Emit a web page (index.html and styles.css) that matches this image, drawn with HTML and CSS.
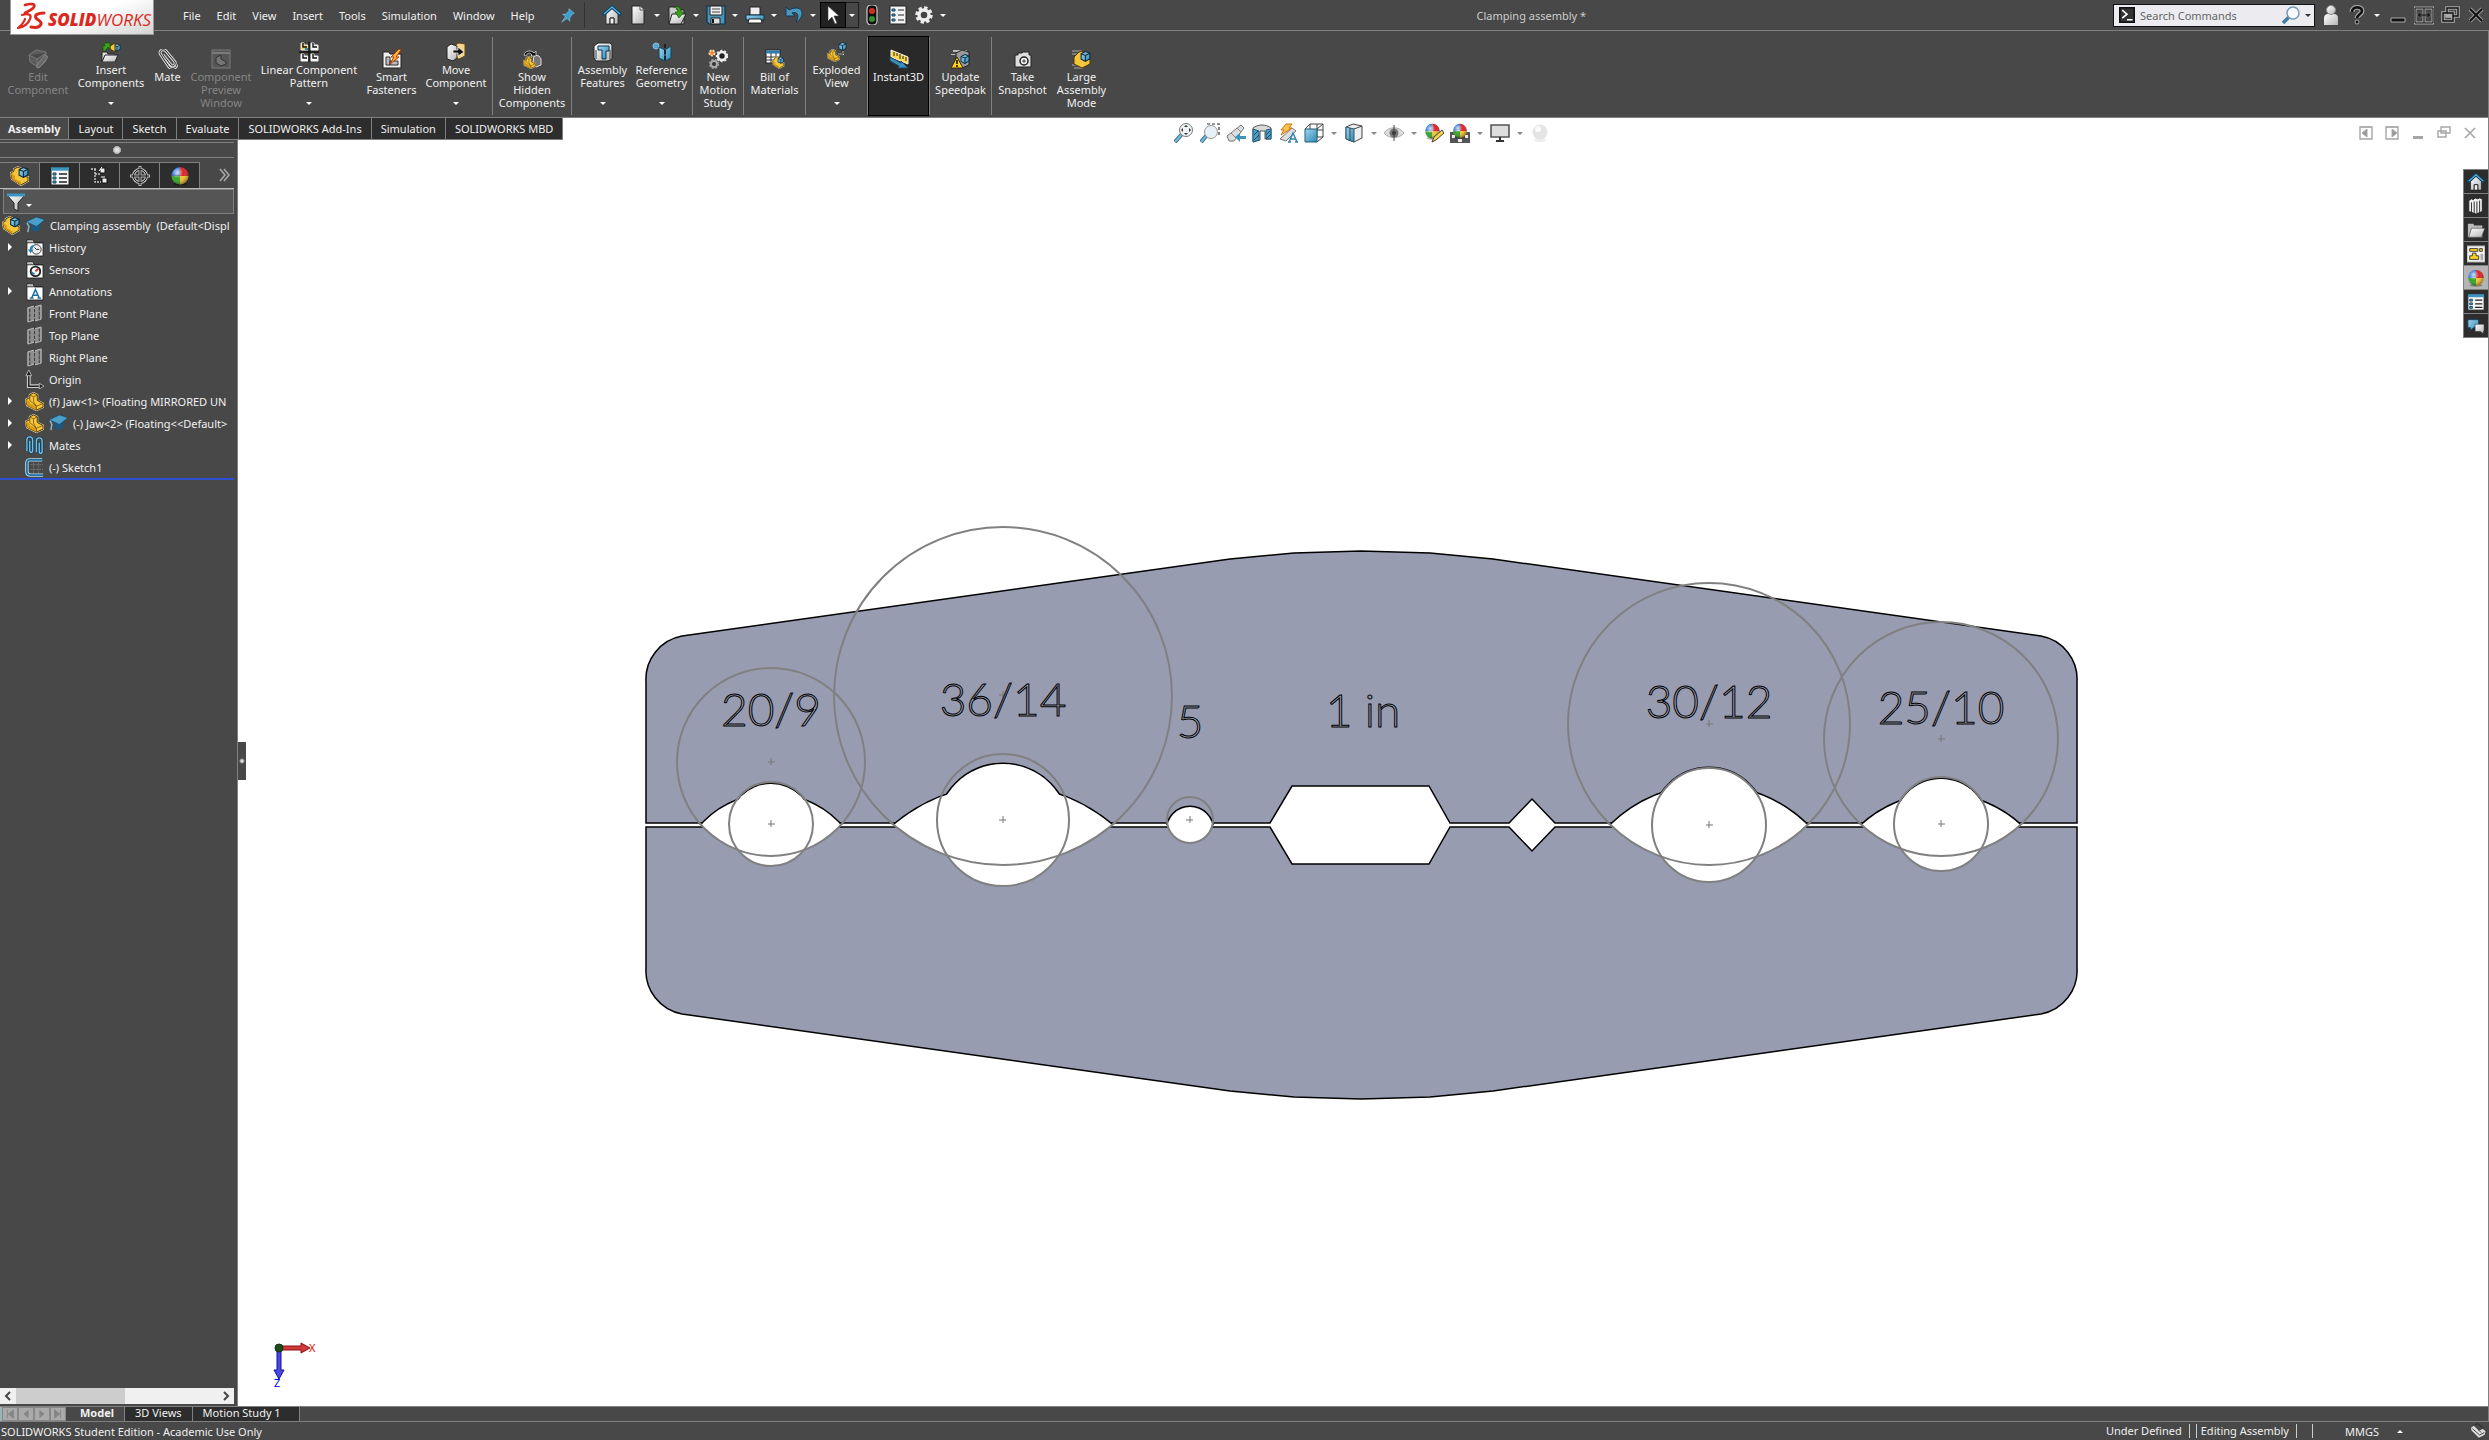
FILE: index.html
```html
<!DOCTYPE html>
<html lang="en">
<head>
    <meta charset="UTF-8">
    <meta name="viewport" content="width=device-width, initial-scale=1.0">
    <title>Clamping assembly - SOLIDWORKS</title>
    <link rel="stylesheet" href="styles.css">
</head>
<body>
    <!-- Icon set -->
    <svg class="sprite" aria-hidden="true">
        <defs>
            <linearGradient id="blue" x1="0" y1="0" x2="1" y2="1"><stop offset="0" stop-color="#9fd8f0"/><stop offset="1" stop-color="#2d86b4"/></linearGradient>
            <linearGradient id="silver" x1="0" y1="0" x2="1" y2="1"><stop offset="0" stop-color="#fff"/><stop offset="1" stop-color="#b4b4b4"/></linearGradient>
            <radialGradient id="shine" cx=".35" cy=".3" r=".7"><stop offset="0" stop-color="#fff" stop-opacity=".8"/><stop offset=".5" stop-color="#fff" stop-opacity="0"/><stop offset="1" stop-opacity=".35"/></radialGradient>
        </defs>
        <symbol id="i-part" viewBox="0 0 20 20">
            <path d="M1 8l4-2V3l4-2 4 2v6l6 3v4l-7 3L2 14z" fill="#f6c63a" stroke="#e8dcae" stroke-width="2" stroke-linejoin="round"/>
            <path d="M1 8l4-2V3l4-2 4 2v6l6 3v4l-7 3L2 14z" fill="#f6c63a" stroke="#4b3505" stroke-linejoin="round"/>
            <path d="M1 8l4 2v2l7 3v4L2 14z" fill="#d99a14"/>
            <path d="M5 3l4 2 4-2M9 5v5l3 5 7-3M5 6v3l7 6v4" fill="none" stroke="#6b4c08" stroke-width=".8"/>
        </symbol>
        <symbol id="i-cube" viewBox="0 0 20 20">
            <path d="M2 5l8-4 8 3v10l-8 5-8-4z" fill="url(#blue)" stroke="#0d2a3c" stroke-width="2"/>
            <path d="M2 5l8 3 8-4M10 8v11" fill="none" stroke="#0d2a3c" stroke-width="2"/>
        </symbol>
        <symbol id="i-assembly" viewBox="0 0 20 20">
            <path d="M1 7l3-2V3l4-2 4 2v7l6 1v4l-7 4-9-6z" fill="#f6c63a" stroke="#e8dcae" stroke-width="2"/>
            <path d="M1 7l3-2V3l4-2 4 2v7l6 1v4l-7 4-9-6z" fill="#f6c63a" stroke="#4b3505"/>
            <path d="M1 7l4 3v3l6 3v3l-9-6z" fill="#d99a14"/>
            <use href="#i-cube" x="8" y="1" width="11" height="11"/>
        </symbol>
        <symbol id="i-assembly-off" viewBox="0 0 20 20">
            <path d="M1 6l4-3 4-2 9 2v9l-7 7-9-6zM1 6l8 4 9-6M9 10v8" fill="#5c5c5c" stroke="#777"/>
            <path d="M9 16l8-10 3 2-8 10-3 1z" fill="#686868" stroke="#868686"/>
        </symbol>
        <symbol id="i-insert" viewBox="0 0 20 20">
            <use href="#i-cube" x="12" y="1" width="8" height="9"/>
            <path d="M9 4l5-3v9l-5-3z" fill="#f6c63a" stroke="#4b3505"/>
            <path d="M1 10h5l1 2h7v8H1z" fill="#ddd" stroke="#222"/>
            <path d="M4 13h13l-3 7H1z" fill="url(#silver)" stroke="#222"/>
            <path d="M2 9V4h2l-1-3h6v6L7 5 4 9z" fill="#3aa21b" stroke="#114d05" stroke-width=".6"/>
        </symbol>
        <symbol id="i-mate" viewBox="0 0 20 20">
            <path d="M5 6l8 10c2 2 5 0 4-3L8 2C5-1 0 2 3 6l8 12c3 3 8 1 8-3" fill="none" stroke="#d8d8d8" stroke-width="3"/>
            <path d="M5 6l8 10c2 2 5 0 4-3L8 2C5-1 0 2 3 6l8 12c3 3 8 1 8-3" fill="none" stroke="#222"/>
        </symbol>
        <symbol id="i-preview" viewBox="0 0 20 20">
            <rect x="1" y="1" width="18" height="18" fill="#565656" stroke="#7a7a7a"/>
            <path d="M1 4h18" stroke="#7a7a7a" stroke-width="2"/>
            <path d="M6 8l4-2v4l5 3v2l-5 2-5-3V9z" fill="#747474" stroke="#333"/>
        </symbol>
        <symbol id="i-pattern" viewBox="0 0 20 20">
            <g stroke="#e8e8e8" stroke-width="1"><path d="M2 1h3v2h4v5H2z" fill="#f6d24a"/><path d="M12 1h3v2h4v5h-7zM2 12h3v2h4v5H2zM12 12h3v2h4v5h-7z" fill="#fff"/></g>
            <path d="M4 1v4h4M14 1v4h4M4 12v4h4M14 12v4h4M10 0v20M0 10h20" stroke="#111" stroke-width="1.4" fill="none"/>
            <path d="M6 6h3v2H6z" fill="#2b8fc4"/>
        </symbol>
        <symbol id="i-smart" viewBox="0 0 20 20">
            <path d="M1 3h6l1 2h11v14H1z" fill="#eee" stroke="#222"/>
            <path d="M4 8v8h4V8zM8 12h8v4H8z" fill="#bbb" stroke="#333"/>
            <path d="M17 0L9 8h3l-4 7 9-7h-3l5-7z" fill="#ffb52e" stroke="#b3390a"/>
        </symbol>
        <symbol id="i-move" viewBox="0 0 20 20">
            <path d="M9 3l4-2 6 1v12l-6 3-4-2z" fill="#f4d491" stroke="#6a4b10"/>
            <path d="M1 5l4-3 6 2v12l-4 3-6-2z" fill="url(#silver)" stroke="#222"/>
            <path d="M7 8h5V5l6 5-6 4v-3H7z" fill="#111" stroke="#fff" stroke-width=".7"/>
        </symbol>
        <symbol id="i-showhide" viewBox="0 0 20 20">
            <path d="M12 6l5 1 2 3v6l-5 2-3-3z" fill="#777" stroke="#ddd"/>
            <use href="#i-part" x="1" y="7" width="13" height="13"/>
            <path d="M2 6c1-5 8-5 10-2l2-2v5H9l1-1C8 3 5 4 4 7z" fill="#111" stroke="#ddd" stroke-width=".8"/>
        </symbol>
        <symbol id="i-features" viewBox="0 0 20 20">
            <path d="M1 4l4-3h12l2 2v14l-4 2H3l-2-3z" fill="url(#silver)" stroke="#222"/>
            <path d="M5 4h11v5h-3v8H9V8H5z" fill="url(#blue)" stroke="#0d3550"/>
            <path d="M3 8v9M17 8v9" stroke="#444"/>
        </symbol>
        <symbol id="i-refgeo" viewBox="0 0 20 20">
            <circle cx="4" cy="4" r="3" fill="#4fa6d4" stroke="#9bd"/>
            <path d="M7 5l6 3v11l-6-3zM13 8l6-4v12l-6 3z" fill="url(#blue)" stroke="#17425c"/>
            <path d="M13 2v18" stroke="#111" stroke-width="1.4" stroke-dasharray="4 2"/>
        </symbol>
        <symbol id="i-motion" viewBox="0 0 20 20">
            <circle cx="4" cy="4" r="2.5" fill="#f37a20" stroke="#ffd9a8" stroke-width="2" stroke-dasharray="2 1"/>
            <circle cx="14" cy="7" r="4" fill="#222" stroke="#eee" stroke-width="2.6"/>
            <circle cx="14" cy="7" r="5.6" fill="none" stroke="#eee" stroke-width="1.4" stroke-dasharray="2 2"/>
            <circle cx="6" cy="15" r="3" fill="#333" stroke="#aaa" stroke-width="2"/>
            <circle cx="6" cy="15" r="4.4" fill="none" stroke="#aaa" stroke-width="1.2" stroke-dasharray="2 1.5"/>
        </symbol>
        <symbol id="i-bom" viewBox="0 0 20 20">
            <rect x="1" y="1" width="14" height="13" fill="#fff" stroke="#222"/>
            <path d="M1 3h14" stroke="#2b7fae" stroke-width="3"/>
            <path d="M1 8h14M1 11h14M6 4v10M11 4v10" stroke="#333"/>
            <use href="#i-assembly" x="7" y="7" width="13" height="13"/>
        </symbol>
        <symbol id="i-exploded" viewBox="0 0 20 20">
            <use href="#i-part" x="0" y="7" width="13" height="13"/>
            <use href="#i-cube" x="11" y="0" width="9" height="9"/>
            <path d="M11 12h5V9" fill="none" stroke="#ddd" stroke-width="2"/><path d="M11 12h5V9" fill="none" stroke="#111"/>
        </symbol>
        <symbol id="i-instant" viewBox="0 0 20 20">
            <path d="M2 1l17 7v7L2 8z" fill="#ffd84a" stroke="#eee"/>
            <path d="M5 3v4M8 4v3M11 5v5M14 7v3M17 8v4" stroke="#222"/>
            <path d="M1 8l11 6v-2l7 7-10 0 1-2L1 12z" fill="#3f8fbb" stroke="#1c4760"/>
        </symbol>
        <symbol id="i-speedpak" viewBox="0 0 20 20">
            <path d="M2 1h14v2H2zM0 5h8v1H0z" fill="#bbb"/>
            <path d="M5 4l6-3 7 2v13l-7 3-6-2z" fill="#999" stroke="#222"/>
            <use href="#i-cube" x="9" y="2" width="10" height="16"/>
            <path d="M6 8l6 11H0z" fill="#ffd21f" stroke="#3a2c00"/>
            <path d="M6 11v4M6 16v2" stroke="#111" stroke-width="1.6"/>
        </symbol>
        <symbol id="i-camera" viewBox="0 0 20 20">
            <path d="M2 6h3V4h4l1-1h6v3h2v12H2z" fill="#ddd" stroke="#222"/>
            <circle cx="11" cy="12" r="4" fill="#eee" stroke="#222" stroke-width="1.5"/><circle cx="11" cy="12" r="1.6" fill="#555"/>
        </symbol>
        <symbol id="i-large" viewBox="0 0 20 20">
            <path d="M0 2h10M0 5h8M0 16h6M2 19h9" stroke="#aaa"/>
            <path d="M2 8l5-5 4-1v9l7-1v5l-8 4-8-4z" fill="#f6c63a" stroke="#4b3505"/>
            <use href="#i-cube" x="8" y="1" width="11" height="13"/>
        </symbol>
        <symbol id="i-pin" viewBox="0 0 20 20">
            <path d="M11 3l6 5-2 1-3 4 0 4-3-3-6 4 4-6-3-3 4 0 3-4z" fill="#3d9fd0" stroke="#8cc6e2" stroke-width=".6"/>
        </symbol>
        <symbol id="i-home" viewBox="0 0 20 20">
            <path d="M4 9l6-6 6 6v10h-4v-6H8v6H4z" fill="url(#silver)" stroke="#222" stroke-width=".8"/>
            <path d="M8 13h4v6H8z" fill="#eee" stroke="#222"/>
            <path d="M1 10l9-8 9 8" fill="none" stroke="#0f4666" stroke-width="3.4"/><path d="M2 9l8-7 8 7" fill="none" stroke="#5fb5dc" stroke-width="1.2"/>
        </symbol>
        <symbol id="i-new" viewBox="0 0 20 20">
            <path d="M4 1h8l4 4v14H4z" fill="url(#silver)" stroke="#222"/><path d="M12 1v4h4" fill="#eee" stroke="#555"/>
        </symbol>
        <symbol id="i-open" viewBox="0 0 20 20">
            <path d="M2 2h8v3h7v14H2z" fill="#ccc" stroke="#222"/>
            <path d="M5 9h14l-5 10H2z" fill="url(#silver)" stroke="#222"/>
            <path d="M7 2c5-2 7 2 7 5h3l-5 6-4-6h3c0-3-2-4-4-5z" fill="#3aa21b" stroke="#114d05" stroke-width=".6"/>
        </symbol>
        <symbol id="i-save" viewBox="0 0 20 20">
            <path d="M1 1h18v18H3l-2-2z" fill="#4a93b9" stroke="#0f3247" stroke-width="1.2"/>
            <path d="M4 1h12v9H4z" fill="#eee" stroke="#222"/><path d="M6 4h8M6 7h8" stroke="#444"/>
            <path d="M5 13h9v6H5z" fill="#ddd" stroke="#222"/><path d="M7 14v4" stroke="#111" stroke-width="2"/>
        </symbol>
        <symbol id="i-print" viewBox="0 0 20 20">
            <path d="M5 2h10v8H5z" fill="#eee" stroke="#222"/>
            <path d="M1 10h18v5H1z" fill="url(#blue)" stroke="#0f3247"/>
            <path d="M4 14h12l1 4H3z" fill="#fff" stroke="#222"/>
        </symbol>
        <symbol id="i-undo" viewBox="0 0 20 20">
            <path d="M2 2v9h9L8 8c5-2 8 2 4 9 8-4 8-14 0-14-3 0-5 1-7 2z" fill="#4a97bf" stroke="#123c55"/>
        </symbol>
        <symbol id="i-cursor" viewBox="0 0 20 20">
            <path d="M5 1v15l4-4 3 7 2-1-3-7h5z" fill="#fff" stroke="#444" stroke-width=".6"/>
        </symbol>
        <symbol id="i-traffic" viewBox="0 0 20 20">
            <rect x="5" y="0" width="10" height="20" rx="4" fill="#111" stroke="#ccc" stroke-width="1.2"/>
            <circle cx="10" cy="6" r="3" fill="#d62e1e"/><circle cx="10" cy="14" r="3" fill="#319132"/>
        </symbol>
        <symbol id="i-list" viewBox="0 0 20 20">
            <path d="M2 1h16v18H2z" fill="#f3f3f3" stroke="#222"/>
            <path d="M4 4h3v2H4zM4 9h3v2H4zM4 14h3v2H4z" fill="#4fb0de" stroke="#14415c"/>
            <path d="M10 5h6M10 10h6M10 15h6" stroke="#222" stroke-width="1.2"/>
        </symbol>
        <symbol id="i-gear" viewBox="0 0 20 20">
            <circle cx="10" cy="10" r="7.4" fill="none" stroke="#eee" stroke-width="2.6" stroke-dasharray="3.4 2.4"/>
            <circle cx="10" cy="10" r="5" fill="#444" stroke="#eee" stroke-width="3.4"/>
        </symbol>
        <symbol id="i-props" viewBox="0 0 20 20">
            <path d="M1 2h18v17H1z" fill="#f6f6f6" stroke="#222"/><path d="M1 3h18" stroke="#3d95c2" stroke-width="3.4"/>
            <path d="M3 7h3v2H3zM3 11h3v2H3zM3 15h3v2H3z" fill="#4fb0de" stroke="#14415c"/>
            <path d="M9 8h8M9 12h8M9 16h8" stroke="#222" stroke-width="1.3"/>
        </symbol>
        <symbol id="i-config" viewBox="0 0 20 20">
            <path d="M1 3h6M5 3v13h6M5 8h6" fill="none" stroke="#ccc" stroke-width="1.4" stroke-dasharray="2 1"/>
            <path d="M10 2h5v5h-5z" fill="#eee" stroke="#111"/><path d="M12 12h5v5h-5z" fill="#eee" stroke="#111"/><path d="M9 5l3-4M11 11h4" stroke="#fff"/>
        </symbol>
        <symbol id="i-target" viewBox="0 0 20 20">
            <g fill="none" stroke="#bbb" stroke-width="3"><circle cx="10" cy="10" r="6.5"/><path d="M10 0v20M0 10h20"/></g>
            <g fill="none" stroke="#111"><circle cx="10" cy="10" r="6.5"/><path d="M10 1v18M1 10h18"/></g>
        </symbol>
        <symbol id="i-ball" viewBox="0 0 20 20">
            <ellipse cx="10" cy="18" rx="7" ry="1.6" fill="#000" opacity=".3"/>
            <path d="M10 9V1a8.500 8.500 0 0 0-8.500 9z" fill="#2b6fd4"/><path d="M10 10V1a8.500 8.500 0 0 1 8.500 9z" fill="#d92525"/>
            <path d="M1.500 10H10v8.500A8.500 8.500 0 0 1 1.500 10z" fill="#37a32a"/><path d="M18.500 10H10v8.500a8.500 8.500 0 0 0 8.500-8.500z" fill="#f5c431"/>
            <circle cx="10" cy="10" r="8.500" fill="url(#shine)"/>
        </symbol>
        <symbol id="i-funnel" viewBox="0 0 20 20">
            <path d="M1 3h18l-7 8v8l-4-2v-6z" fill="url(#silver)" stroke="#222"/><path d="M1 3h18" stroke="#3d95c2" stroke-width="3"/>
        </symbol>
        <symbol id="i-cap" viewBox="0 0 20 20">
            <path d="M6 9v5c2 4 7 3 9-1V8z" fill="#1a5a80"/>
            <path d="M0 6l11-5 9 3-9 7z" fill="#4aa0cb" stroke="#0f3a54" stroke-width=".6"/>
            <path d="M1 7l2 4-1 6" fill="none" stroke="#7fb6d2" stroke-width="1.6"/>
        </symbol>
        <symbol id="i-folder" viewBox="0 0 20 20">
            <path d="M2 2h6l2 3h9v14H2z" fill="#fff" stroke="#222"/><path d="M2 5h17" stroke="#222"/><path d="M3 3h5" stroke="#aaa" stroke-width="2"/>
        </symbol>
        <symbol id="i-history" viewBox="0 0 20 20">
            <use href="#i-folder"/><circle cx="12" cy="12" r="5" fill="#eee" stroke="#333"/><path d="M10 10l2 2h3" stroke="#222" fill="none"/><path d="M10 7c-4 0-5 3-5 5H3l3 4 3-4H7" fill="#2b86b8"/>
        </symbol>
        <symbol id="i-sensor" viewBox="0 0 20 20">
            <use href="#i-folder"/><circle cx="11" cy="12" r="5" fill="#fff" stroke="#222" stroke-width="2"/><path d="M11 12l3-3" stroke="#d22" stroke-width="2"/><path d="M7 13l3 2" stroke="#2b86b8" stroke-width="2"/>
        </symbol>
        <symbol id="i-note" viewBox="0 0 20 20">
            <use href="#i-folder"/><path d="M7 17l4-9 4 9M8 14h6M5 17h4M13 17h4" fill="none" stroke="#1c6f9f" stroke-width="1.5"/>
        </symbol>
        <symbol id="i-plane" viewBox="0 0 20 20">
            <path d="M3 4l7-2v15l-7 2zM10 3l7-2v15l-7 2z" fill="#8e8e8e" stroke="#bdbdbd"/>
            <path d="M10 0v20M5 5v13M15 3v13" stroke="#333" stroke-dasharray="4 1"/>
        </symbol>
        <symbol id="i-origin" viewBox="0 0 20 20">
            <path d="M4 3v14h13" fill="none" stroke="#ccc" stroke-width="4"/><path d="M4 3v14h13" fill="none" stroke="#222" stroke-width="1.600"/>
            <path d="M4 0L1 6h6zM20 17l-5-3v6z" fill="#222" stroke="#ccc" stroke-width=".8"/>
        </symbol>
        <symbol id="i-mates" viewBox="0 0 20 20">
            <g fill="none" stroke="#15435e" stroke-width="3"><path d="M2 16V4c0-4 6-4 6 0v11c0 3-3 3-3 0V5M12 17V5c0-4 6-4 6 0v11c0 3-3 3-3 0V7"/></g>
            <g fill="none" stroke="#79bfe0" stroke-width="1.4"><path d="M2 16V4c0-4 6-4 6 0v11c0 3-3 3-3 0V5M12 17V5c0-4 6-4 6 0v11c0 3-3 3-3 0V7"/></g>
        </symbol>
        <symbol id="i-sketch" viewBox="0 0 20 20">
            <path d="M6 7h13M6 12h13M9 5v12M14 5v12" stroke="#777" stroke-dasharray="2 1"/>
            <path d="M18 2H5C3 2 2 3 2 5v9c0 2 1 4 4 4h13" fill="none" stroke="#b9dcec" stroke-width="3.6"/>
            <path d="M18 2H5C3 2 2 3 2 5v9c0 2 1 4 4 4h13" fill="none" stroke="#1c6f9f" stroke-width="1.8"/>
        </symbol>
        <symbol id="i-zoomfit" viewBox="0 0 20 20">
            <path d="M1 19l7-8" stroke="#2f6f90" stroke-width="4"/><path d="M1 19l7-8" stroke="#7db7d3" stroke-width="2"/>
            <circle cx="12" cy="7" r="6.500" fill="#eef3f5" stroke="#777"/><path d="M12 2l2 2h-4zM12 12l2-2h-4zM7 7l2-2v4zM17 7l-2-2v4z" fill="#333"/>
        </symbol>
        <symbol id="i-zoomarea" viewBox="0 0 20 20">
            <path d="M7 1h12v12" fill="none" stroke="#333" stroke-width="1.2" stroke-dasharray="3 2"/>
            <path d="M1 19l6-7" stroke="#2f6f90" stroke-width="4"/><path d="M1 19l6-7" stroke="#7db7d3" stroke-width="2"/><circle cx="11" cy="9" r="6.500" fill="#e6f0f6" stroke="#999"/>
        </symbol>
        <symbol id="i-prev" viewBox="0 0 20 20">
            <path d="M1 13L15 2l3 3L8 18H3z" fill="#ddd" stroke="#777"/><path d="M5 10l5 5M11 5l4 4" stroke="#888"/>
            <path d="M9 14l5-4v3h6v3h-6v3z" fill="#3f94bf"/>
        </symbol>
        <symbol id="i-section" viewBox="0 0 20 20">
            <path d="M1 5c5-4 13-4 18 0v11h-6V8H8v9l-7 2z" fill="#d8d8d8" stroke="#555"/>
            <path d="M1 6l6 2v9l-6 2zM14 7l5-1v10h-5z" fill="#4aa0cb" stroke="#245a78"/><path d="M2 12l4-4M2 17l5-5M14 12l4-4M14 16l5-5" stroke="#1b4a66"/>
        </symbol>
        <symbol id="i-annview" viewBox="0 0 20 20">
            <path d="M2 16L14 5l4 3L8 18z" fill="#ddd" stroke="#777"/><path d="M8 1h6l-3 4h3L3 12l3-5H3z" fill="#ffc04a" stroke="#c77a16"/>
            <path d="M11 19l4-9 4 9M12 16h6M10 19h3M17 19h3" fill="none" stroke="#2f86b2" stroke-width="1.500"/>
        </symbol>
        <symbol id="i-orient" viewBox="0 0 20 20">
            <path d="M6 1h13v13H6zM1 6l5-5M13 6l6-5M13 19l6-5M13 1v13M6 7h13" fill="none" stroke="#444"/><path d="M1 6h12v13H1z" fill="url(#blue)" stroke="#245a78"/>
        </symbol>
        <symbol id="i-display" viewBox="0 0 20 20">
            <path d="M2 4l7-3 9 2v12l-8 4-8-3z" fill="#eee" stroke="#444"/><path d="M2 4l8 2v13l-8-3z" fill="url(#blue)" stroke="#245a78"/><path d="M10 6l8-3M6 5v13" stroke="#444"/>
        </symbol>
        <symbol id="i-eye" viewBox="0 0 20 20">
            <path d="M0 10c5-7 15-7 20 0-5 6-15 6-20 0z" fill="#ddd" stroke="#aaa"/><circle cx="10" cy="10" r="4.500" fill="#777"/><circle cx="10" cy="10" r="2" fill="#333"/><path d="M10 2v16" stroke="#444"/>
        </symbol>
        <symbol id="i-appear" viewBox="0 0 20 20">
            <use href="#i-ball" x="0" y="0" width="17" height="17"/><path d="M8 19l2-5 8-7 2 3-8 7z" fill="#f6d24a" stroke="#444"/>
        </symbol>
        <symbol id="i-scene" viewBox="0 0 20 20">
            <path d="M0 9h20v11H0z" fill="#555"/><path d="M2 12h3v3H2zM8 16h4v3H8zM15 12h3v3h-3z" fill="#eee"/><use href="#i-ball" x="2" y="0" width="16" height="16"/>
        </symbol>
        <symbol id="i-monitor" viewBox="0 0 20 20">
            <path d="M1 2h18v12H1z" fill="#ddd" stroke="#555" stroke-width="1.600"/><path d="M10 14v4M6 18h8" stroke="#333" stroke-width="2"/>
        </symbol>
        <symbol id="i-ghost" viewBox="0 0 20 20">
            <ellipse cx="10" cy="17" rx="6" ry="2" fill="#eee"/><circle cx="10" cy="9" r="7.500" fill="#e4e4e4"/><circle cx="8" cy="6" r="3" fill="#fafafa"/>
        </symbol>
        <symbol id="i-search" viewBox="0 0 20 20">
            <path d="M2 18l6-6" stroke="#3d7fa3" stroke-width="3.500"/><circle cx="12" cy="8" r="6" fill="#f6fafd" stroke="#7c9ab0" stroke-width="1.500"/>
        </symbol>
        <symbol id="i-prompt" viewBox="0 0 20 20">
            <path d="M1 1h18v18H1z" fill="#333" stroke="#111" stroke-width="2"/><path d="M4 4l6 5-6 5M10 16h7" fill="none" stroke="#fff" stroke-width="2"/>
        </symbol>
        <symbol id="i-user" viewBox="0 0 20 20">
            <path d="M3 20v-7c0-3 2-4 4-4h6c2 0 4 1 4 4v7z" fill="url(#silver)"/><circle cx="10" cy="5" r="4.500" fill="url(#silver)" stroke="#888"/>
        </symbol>
        <symbol id="i-help" viewBox="0 0 20 20">
            <path d="M5 7c0-6 10-6 10-1 0 3-5 4-5 7" fill="none" stroke="#aaa" stroke-width="5"/><path d="M5 7c0-6 10-6 10-1 0 3-5 4-5 7" fill="none" stroke="#111" stroke-width="2.600"/>
            <circle cx="10" cy="17" r="2" fill="#111" stroke="#aaa"/>
        </symbol>
        <symbol id="i-min" viewBox="0 0 20 20"><path d="M3 13h14v4H3z" fill="#111" stroke="#aaa"/></symbol>
        <symbol id="i-span" viewBox="0 0 20 20">
            <path d="M1 3h18v15H1zM10 3v15" fill="none" stroke="#aaa" stroke-width="3"/><path d="M1 3h18v15H1zM10 3v15M4 10h12" fill="none" stroke="#111"/><path d="M3 10l4-3v6zM17 10l-4-3v6z" fill="#111" stroke="#888" stroke-width=".5"/>
        </symbol>
        <symbol id="i-restore" viewBox="0 0 20 20">
            <path d="M7 3h11v8H7zM3 8h10v8H3z" fill="#484848" stroke="#aaa" stroke-width="3.600"/><path d="M7 3h11v8h-5V8H7zM3 8h10v8H3z" fill="none" stroke="#111" stroke-width="1.400"/>
        </symbol>
        <symbol id="i-close" viewBox="0 0 20 20"><path d="M4 4l12 12M16 4L4 16" stroke="#999" stroke-width="4"/><path d="M4 4l12 12M16 4L4 16" stroke="#111" stroke-width="2"/></symbol>
        <symbol id="i-dockl" viewBox="0 0 20 20"><path d="M4 4h12v12H4z" fill="none" stroke="#a6a6a6" stroke-width="1.400"/><path d="M11 6v8l-5-4zM4 4h12" fill="#999" stroke="#a6a6a6"/></symbol>
        <symbol id="i-dockr" viewBox="0 0 20 20"><path d="M4 4h12v12H4z" fill="none" stroke="#a6a6a6" stroke-width="1.400"/><path d="M10 6v8l5-4zM4 4h12" fill="#999" stroke="#a6a6a6"/></symbol>
        <symbol id="i-dmin" viewBox="0 0 20 20"><path d="M5 13h10v3H5z" fill="#a6a6a6"/></symbol>
        <symbol id="i-drestore" viewBox="0 0 20 20"><path d="M7 4h9v6H7zM4 8h8v6H4z" fill="#fff" stroke="#a6a6a6" stroke-width="1.400"/></symbol>
        <symbol id="i-dclose" viewBox="0 0 20 20"><path d="M5 5l10 10M15 5L5 15" stroke="#a6a6a6" stroke-width="1.600"/></symbol>
        <symbol id="i-books" viewBox="0 0 20 20">
            <path d="M2 4l3-2 2 1 2-2 3 1 2-1 3 1v14l-7 3-8-3z" fill="#eee" stroke="#222"/><path d="M5 6v12M8 5v13M11 5v13M14 4v13" stroke="#222"/>
        </symbol>
        <symbol id="i-library" viewBox="0 0 20 20"><path d="M1 3h6l1 2h9v13H1z" fill="#bbb"/><path d="M5 8h15l-4 10H2z" fill="url(#silver)" stroke="#333" stroke-width=".6"/></symbol>
        <symbol id="i-palette" viewBox="0 0 20 20">
            <path d="M0 1h20v18H0z" fill="#f2f2f2" stroke="#999"/><path d="M3 4h9v3H3zM14 4h3v3h-3zM6 9h4v3h3v4H3v-4h3z" fill="#ffd21f" stroke="#333"/><path d="M15 10h3v7h-3z" fill="#aaa"/>
        </symbol>
        <symbol id="i-forum" viewBox="0 0 20 20">
            <path d="M1 3h12v9H7l-3 3v-3H1z" fill="url(#blue)" stroke="#17425c"/><path d="M9 8h10v8h-1v3l-3-3H9z" fill="url(#silver)" stroke="#222" stroke-width=".6"/>
        </symbol>
        <symbol id="i-tag" viewBox="0 0 20 20">
            <path d="M1 5l4-2 6 6 5-2 4 3-1 5-8 4L1 9z" fill="#ddd" stroke="#111" stroke-width=".7"/><path d="M6 2l4-1 6 5M3 7l9 8 6-3M11 9l3 3" fill="none" stroke="#222"/>
        </symbol>
    </svg>

    <header class="titlebar">
        <a href="#" class="logo" aria-label="SOLIDWORKS home">
            <svg class="logo-mark" viewBox="0 0 30 30">
                <g fill="none" stroke="#da291c" stroke-linecap="round" stroke-linejoin="round">
                    <path d="M9 3c6-2 11-1 9 2-2 3-5 4-9 6" stroke-width="2.600"/>
                    <path d="M6 13c7-2 10 0 8 4-2 5-6 8-12 9 4-3 6-6 7-9" stroke-width="2.200"/>
                    <path d="M28 11c-6 0-10 2-8 5 1 2 6 3 5 6-1 3-5 4-10 3" stroke-width="3"/>
                </g>
            </svg>
            <span class="logo-text"><b>SOLID</b>WORKS</span>
        </a>
        <nav class="menu">
            <a href="#">File</a>
            <a href="#">Edit</a>
            <a href="#">View</a>
            <a href="#">Insert</a>
            <a href="#">Tools</a>
            <a href="#">Simulation</a>
            <a href="#">Window</a>
            <a href="#">Help</a>
        </nav>
        <button class="tool pin" aria-label="Pin menu"><svg><use href="#i-pin"/></svg></button>
        <div class="quick">
            <button class="tool" aria-label="Home"><svg><use href="#i-home"/></svg></button>
            <button class="tool" aria-label="New"><svg><use href="#i-new"/></svg></button>
            <button class="drop" aria-label="New options"></button>
            <button class="tool" aria-label="Open"><svg><use href="#i-open"/></svg></button>
            <button class="drop" aria-label="Open options"></button>
            <button class="tool" aria-label="Save"><svg><use href="#i-save"/></svg></button>
            <button class="drop" aria-label="Save options"></button>
            <button class="tool" aria-label="Print"><svg><use href="#i-print"/></svg></button>
            <button class="drop" aria-label="Print options"></button>
            <button class="tool" aria-label="Undo"><svg><use href="#i-undo"/></svg></button>
            <button class="drop" aria-label="Undo options"></button>
            <button class="tool pressed" aria-label="Select"><svg><use href="#i-cursor"/></svg></button>
            <button class="drop framed" aria-label="Select options"></button>
            <button class="tool" aria-label="Rebuild"><svg><use href="#i-traffic"/></svg></button>
            <button class="tool" aria-label="File properties"><svg><use href="#i-list"/></svg></button>
            <button class="tool" aria-label="Options"><svg><use href="#i-gear"/></svg></button>
            <button class="drop" aria-label="More options"></button>
        </div>
        <h1 class="doc-title">Clamping assembly *</h1>
        <form class="search">
            <svg><use href="#i-prompt"/></svg>
            <input type="text" placeholder="Search Commands" aria-label="Search Commands">
            <button type="button" class="search-go" aria-label="Search"><svg><use href="#i-search"/></svg></button>
            <button type="button" class="drop dark" aria-label="Search scope"></button>
        </form>
        <div class="window-tools">
            <button class="tool" aria-label="Log in"><svg><use href="#i-user"/></svg></button>
            <button class="tool" aria-label="Help"><svg><use href="#i-help"/></svg></button>
            <button class="drop help-drop" aria-label="Help options"></button>
            <button class="tool" aria-label="Minimize"><svg><use href="#i-min"/></svg></button>
            <button class="tool" aria-label="Span displays"><svg><use href="#i-span"/></svg></button>
            <button class="tool" aria-label="Restore"><svg><use href="#i-restore"/></svg></button>
            <button class="tool" aria-label="Close"><svg><use href="#i-close"/></svg></button>
        </div>
    </header>

    <div class="ribbon">
        <div class="group">
            <button class="cmd wide off"><svg><use href="#i-assembly-off"/></svg><span>Edit<br>Component</span></button>
            <button class="cmd wider split"><svg><use href="#i-insert"/></svg><span>Insert<br>Components</span></button>
            <button class="cmd tiny"><svg><use href="#i-mate"/></svg><span>Mate</span></button>
            <button class="cmd wide off"><svg><use href="#i-preview"/></svg><span>Component<br>Preview<br>Window</span></button>
            <button class="cmd widest split"><svg><use href="#i-pattern"/></svg><span>Linear Component<br>Pattern</span></button>
            <button class="cmd"><svg><use href="#i-smart"/></svg><span>Smart<br>Fasteners</span></button>
            <button class="cmd wide split"><svg><use href="#i-move"/></svg><span>Move<br>Component</span></button>
        </div>
        <div class="group">
            <button class="cmd wider"><svg><use href="#i-showhide"/></svg><span>Show<br>Hidden<br>Components</span></button>
        </div>
        <div class="group">
            <button class="cmd split"><svg><use href="#i-features"/></svg><span>Assembly<br>Features</span></button>
            <button class="cmd split"><svg><use href="#i-refgeo"/></svg><span>Reference<br>Geometry</span></button>
        </div>
        <div class="group">
            <button class="cmd small"><svg><use href="#i-motion"/></svg><span>New<br>Motion<br>Study</span></button>
        </div>
        <div class="group">
            <button class="cmd"><svg><use href="#i-bom"/></svg><span>Bill of<br>Materials</span></button>
        </div>
        <div class="group">
            <button class="cmd split"><svg><use href="#i-exploded"/></svg><span>Exploded<br>View</span></button>
        </div>
        <div class="group">
            <button class="cmd active"><svg><use href="#i-instant"/></svg><span>Instant3D</span></button>
        </div>
        <div class="group">
            <button class="cmd"><svg><use href="#i-speedpak"/></svg><span>Update<br>Speedpak</span></button>
        </div>
        <div class="group">
            <button class="cmd"><svg><use href="#i-camera"/></svg><span>Take<br>Snapshot</span></button>
            <button class="cmd"><svg><use href="#i-large"/></svg><span>Large<br>Assembly<br>Mode</span></button>
        </div>
    </div>

    <main class="workspace">
        <nav class="tabs">
            <a href="#" class="current">Assembly</a>
            <a href="#">Layout</a>
            <a href="#">Sketch</a>
            <a href="#">Evaluate</a>
            <a href="#">SOLIDWORKS Add-Ins</a>
            <a href="#">Simulation</a>
            <a href="#">SOLIDWORKS MBD</a>
        </nav>

        <aside class="panel">
            <div class="grip"></div>
            <div class="panel-tabs">
                <button class="current" aria-label="FeatureManager"><svg><use href="#i-assembly"/></svg></button>
                <button aria-label="PropertyManager"><svg><use href="#i-props"/></svg></button>
                <button aria-label="ConfigurationManager"><svg><use href="#i-config"/></svg></button>
                <button aria-label="DimXpertManager"><svg><use href="#i-target"/></svg></button>
                <button aria-label="DisplayManager"><svg><use href="#i-ball"/></svg></button>
                <button class="more" aria-label="More tabs"><svg viewBox="0 0 20 20"><path d="M6 4l5 6-5 6M10 4l5 6-5 6" fill="none" stroke="#aaa" stroke-width="1.500"/></svg></button>
            </div>
            <button class="filter" aria-label="Filter tree"><svg><use href="#i-funnel"/></svg><i class="caret"></i></button>
            <ul class="tree">
                <li class="root"><svg><use href="#i-assembly"/></svg><svg><use href="#i-cap"/></svg><span>Clamping assembly&nbsp; (Default&lt;Displ</span></li>
                <li class="branch"><svg><use href="#i-history"/></svg><span>History</span></li>
                <li><svg><use href="#i-sensor"/></svg><span>Sensors</span></li>
                <li class="branch"><svg><use href="#i-note"/></svg><span>Annotations</span></li>
                <li><svg><use href="#i-plane"/></svg><span>Front Plane</span></li>
                <li><svg><use href="#i-plane"/></svg><span>Top Plane</span></li>
                <li><svg><use href="#i-plane"/></svg><span>Right Plane</span></li>
                <li><svg><use href="#i-origin"/></svg><span>Origin</span></li>
                <li class="branch"><svg><use href="#i-part"/></svg><span>(f) Jaw&lt;1&gt; (Floating MIRRORED UN</span></li>
                <li class="branch"><svg><use href="#i-part"/></svg><svg><use href="#i-cap"/></svg><span>(-) Jaw&lt;2&gt; (Floating&lt;&lt;Default&gt;</span></li>
                <li class="branch"><svg><use href="#i-mates"/></svg><span>Mates</span></li>
                <li><svg><use href="#i-sketch"/></svg><span>(-) Sketch1</span></li>
            </ul>
            <div class="hscroll">
                <button aria-label="Scroll left"><svg viewBox="0 0 10 10"><path d="M7 1L3 5l4 4" fill="none" stroke="#444" stroke-width="2"/></svg></button>
                <div class="thumb"></div>
                <button aria-label="Scroll right"><svg viewBox="0 0 10 10"><path d="M3 1l4 4-4 4" fill="none" stroke="#444" stroke-width="2"/></svg></button>
            </div>
        </aside>

        <section class="canvas">
            <svg class="model" viewBox="238 118 2250 1288" role="img" aria-label="Clamping assembly, front view">
                <defs>
                    <clipPath id="above"><path d="M600 500h1550v325H600z"/></clipPath>
                    <clipPath id="below"><path d="M600 825h1550v300H600z"/></clipPath>
                    <!-- clamp openings, each a large and a small arc -->
                    <g id="bores">
                        <circle cx="771" cy="762" r="94"/><circle cx="771" cy="824" r="42"/>
                        <circle cx="1003" cy="696" r="169"/><circle cx="1003" cy="820" r="66"/>
                        <circle cx="1190" cy="820" r="23"/>
                        <circle cx="1709" cy="724" r="141"/><circle cx="1709" cy="825" r="57"/>
                        <circle cx="1941" cy="739" r="117"/><circle cx="1941" cy="824" r="47"/>
                    </g>
                </defs>
                <path class="jaw" d="M646 823V682a44 44 0 0 1 36-46L1230 559 1294 553 1361 551 1430 553 1493 559 2041 636a44 44 0 0 1 36 46V823H1555L1532 799 1509 823H1450L1429 786H1292L1270 823z"/>
                <path class="jaw" d="M646 827V968a44 44 0 0 0 36 46L1230 1091 1294 1097 1361 1099 1430 1097 1493 1091 2041 1014a44 44 0 0 0 36-46V827H1555L1532 851 1509 827H1450L1429 864H1292L1270 827z"/>
                <g clip-path="url(#above)"><g transform="matrix(1 0 0 -1 0 1650)"><use href="#bores" class="edge"/><use href="#bores" class="hole"/></g></g>
                <g clip-path="url(#below)"><use href="#bores" class="hole"/></g>
                <use href="#bores" class="construction"/>
                <path class="center" d="M768 762h7M771 758v7M768 824h7M771 820v7M999 695h7M1003 691v7M999 820h7M1003 816v7M1186 820h7M1190 816v7M1706 724h7M1709 720v7M1706 825h7M1709 821v7M1938 739h7M1941 735v7M1938 824h7M1941 820v7"/>
                <g class="engraving">
                    <text x="771" y="726">20/9</text>
                    <text x="1003" y="716">36/14</text>
                    <text x="1190" y="738">5</text>
                    <text x="1363" y="727">1 in</text>
                    <text x="1709" y="718">30/12</text>
                    <text x="1941" y="724">25/10</text>
                </g>
                <g class="triad">
                    <path d="M281 1346h20v-3l9 5-9 5v-3h-20z" fill="#d23a3a" stroke="#8c1010"/>
                    <path d="M277 1350v20h-3l5 9 5-9h-3v-20z" fill="#4a4ae0" stroke="#1010a0"/>
                    <circle cx="279" cy="1348" r="4" fill="#1d4d1d" stroke="#123012"/>
                    <text x="309" y="1352" fill="#e00">X</text>
                    <text x="274" y="1387" fill="#00e">Z</text>
                </g>
            </svg>

            <div class="view-tools">
                <button class="tool" aria-label="Zoom to fit"><svg><use href="#i-zoomfit"/></svg></button>
                <button class="tool" aria-label="Zoom to area"><svg><use href="#i-zoomarea"/></svg></button>
                <button class="tool" aria-label="Previous view"><svg><use href="#i-prev"/></svg></button>
                <button class="tool" aria-label="Section view"><svg><use href="#i-section"/></svg></button>
                <button class="tool" aria-label="Annotation views"><svg><use href="#i-annview"/></svg></button>
                <button class="tool" aria-label="View orientation"><svg><use href="#i-orient"/></svg></button>
                <button class="drop" aria-label="Orientation options"></button>
                <button class="tool" aria-label="Display style"><svg><use href="#i-display"/></svg></button>
                <button class="drop" aria-label="Display style options"></button>
                <button class="tool" aria-label="Hide or show items"><svg><use href="#i-eye"/></svg></button>
                <button class="drop" aria-label="Visibility options"></button>
                <button class="tool" aria-label="Edit appearance"><svg><use href="#i-appear"/></svg></button>
                <button class="tool" aria-label="Apply scene"><svg><use href="#i-scene"/></svg></button>
                <button class="drop" aria-label="Scene options"></button>
                <button class="tool" aria-label="View settings"><svg><use href="#i-monitor"/></svg></button>
                <button class="drop" aria-label="View setting options"></button>
                <button class="tool" aria-label="Render tools"><svg><use href="#i-ghost"/></svg></button>
            </div>

            <div class="doc-tools">
                <button class="tool" aria-label="Collapse left"><svg><use href="#i-dockl"/></svg></button>
                <button class="tool" aria-label="Collapse right"><svg><use href="#i-dockr"/></svg></button>
                <button class="tool" aria-label="Minimize document"><svg><use href="#i-dmin"/></svg></button>
                <button class="tool" aria-label="Restore document"><svg><use href="#i-drestore"/></svg></button>
                <button class="tool" aria-label="Close document"><svg><use href="#i-dclose"/></svg></button>
            </div>

            <div class="task-pane">
                <button aria-label="Resources"><svg><use href="#i-home"/></svg></button>
                <button aria-label="Design library"><svg><use href="#i-books"/></svg></button>
                <button aria-label="File explorer"><svg><use href="#i-library"/></svg></button>
                <button aria-label="View palette"><svg><use href="#i-palette"/></svg></button>
                <button class="current" aria-label="Appearances"><svg><use href="#i-ball"/></svg></button>
                <button aria-label="Custom properties"><svg><use href="#i-props"/></svg></button>
                <button aria-label="Forum"><svg><use href="#i-forum"/></svg></button>
            </div>

            <button class="splitter" aria-label="Collapse panel"></button>
        </section>
    </main>

    <nav class="sheets">
        <div class="sheet-nav">
            <button aria-label="First"><svg viewBox="0 0 14 14"><path d="M4 2v10M11 2v10L5 7z" fill="#858585" stroke="#858585"/></svg></button>
            <button aria-label="Previous"><svg viewBox="0 0 14 14"><path d="M10 2v10L4 7z" fill="#858585"/></svg></button>
            <button aria-label="Next"><svg viewBox="0 0 14 14"><path d="M4 2v10l6-5z" fill="#858585"/></svg></button>
            <button aria-label="Last"><svg viewBox="0 0 14 14"><path d="M10 2v10M3 2v10l6-5z" fill="#858585" stroke="#858585"/></svg></button>
        </div>
        <a href="#" class="current">Model</a>
        <a href="#">3D Views</a>
        <a href="#" class="study">Motion Study 1</a>
    </nav>

    <footer class="status">
        <span class="edition">SOLIDWORKS Student Edition - Academic Use Only</span>
        <span class="cell">Under Defined</span>
        <span class="cell gap"></span>
        <span class="cell">Editing Assembly</span>
        <span class="cell blank"></span>
        <button class="units">MMGS <i class="caret up"></i></button>
        <svg class="tag"><use href="#i-tag"/></svg>
    </footer>
</body>
</html>
```

FILE: styles.css
```css
* {
    box-sizing: border-box;
}

body {
    margin: 0;
    height: 100vh;
    display: flex;
    flex-direction: column;
    overflow: hidden;
    background: #484848;
    color: #f0f0f0;
    font-family: "Noto Sans", "Open Sans", sans-serif;
    font-size: 11px;
    line-height: 13px;
}

button {
    margin: 0;
    padding: 0;
    border: 0;
    background: none;
    color: inherit;
    font: inherit;
}

a {
    color: inherit;
    text-decoration: none;
}

svg {
    display: block;
    flex: none;
    width: 20px;
    height: 20px;
}

.sprite {
    position: absolute;
    width: 0;
    height: 0;
}

/* Shared toolbar buttons */
.tool {
    flex: none;
    width: 26px;
    height: 26px;
    display: flex;
    align-items: center;
    justify-content: center;
}

.tool svg {
    width: 18px;
    height: 18px;
}

.quick .tool svg,
.window-tools .tool svg {
    width: 20px;
    height: 20px;
}

.drop {
    flex: none;
    width: 13px;
    height: 26px;
    display: flex;
    align-items: center;
    justify-content: center;
}

.drop::after,
.caret,
.split::after {
    content: "";
    border: 3px solid transparent;
    border-top-color: #fff;
    border-bottom: 0;
}

.drop.dark::after {
    border-top-color: #333;
}

/* Title bar */
.titlebar {
    position: relative;
    z-index: 3;
    flex: none;
    height: 31px;
    display: flex;
    align-items: center;
    border-bottom: 1px solid #808080;
}

.logo {
    align-self: flex-start;
    flex: none;
    width: 144px;
    height: 35px;
    margin-left: 10px;
    padding-left: 5px;
    display: flex;
    align-items: center;
    background: linear-gradient(160deg, #fff 50%, #d4d4d4);
    border: 1px solid #999;
    border-top: 0;
    color: #da291c;
}

.logo-mark {
    width: 30px;
    height: 30px;
}

.logo-text {
    margin: 4px 0 0 2px;
    font-family: "Open Sans", sans-serif;
    font-size: 17px;
    font-style: italic;
    font-weight: 400;
}

.logo-text b {
    font-weight: 800;
}

.menu {
    display: flex;
    gap: 16px;
    margin-left: 29px;
    white-space: nowrap;
}

.pin {
    margin-left: 20px;
}

.quick {
    display: flex;
    margin-left: 3px;
    padding-left: 14px;
    border-left: 1px solid #333;
}

.pressed {
    background: #222;
    border: 1px solid #000;
}

.framed {
    border: 1px solid #1c1c1c;
    border-left: 0;
}

.doc-title {
    flex: 1;
    margin: 0;
    color: #ccc;
    font-size: 11px;
    font-weight: 400;
    text-align: center;
}

.search {
    flex: none;
    width: 202px;
    height: 23px;
    display: flex;
    align-items: center;
    padding-left: 5px;
    background: #ebebf0;
    border: 1px solid #111;
}

.search svg {
    width: 16px;
    height: 16px;
}

.search input {
    flex: 1;
    min-width: 0;
    padding: 0 5px;
    border: 0;
    outline: 0;
    background: none;
    font: inherit;
}

.search input::placeholder {
    color: #666;
}

.search-go svg {
    width: 20px;
    height: 20px;
}

.window-tools {
    display: flex;
    padding-left: 3px;
}

.help-drop {
    margin-right: 2px;
}

/* Command ribbon */
.ribbon {
    flex: none;
    height: 87px;
    display: flex;
    padding: 6px 0 2px 2px;
    border-bottom: 1px solid #808080;
    border-right: 1px solid #808080;
}

.group {
    display: flex;
    padding: 0 1px;
    border-right: 1px solid #808080;
}

.group:last-child {
    border-right: 0;
}

.cmd {
    width: 59px;
    display: flex;
    flex-direction: column;
    align-items: center;
    padding-top: 12px;
    white-space: nowrap;
}

.cmd.tiny {
    width: 37px;
}

.cmd.small {
    width: 48px;
}

.cmd.wide {
    width: 70px;
}

.cmd.wider {
    width: 76px;
}

.cmd.widest {
    width: 106px;
}

.cmd svg {
    margin-bottom: 1px;
}

.cmd.split {
    padding-top: 5px;
}

.cmd.split::after {
    margin-top: 13px;
}

.cmd.off {
    color: #858585;
}

.cmd.active {
    background: #292929;
    outline: 1px solid #000;
}

/* Workspace */
.workspace {
    flex: 1;
    min-height: 0;
    display: grid;
    grid-template-columns: 238px 1fr;
    grid-template-rows: 22px 1fr;
    border-right: 1px solid #808080;
}

.tabs {
    grid-area: 1 / 1;
    z-index: 2;
    justify-self: start;
    display: flex;
    background: #2d2d2d;
    border-bottom: 1px solid #808080;
    white-space: nowrap;
}

.tabs a {
    padding: 4px 9px 0;
    border-right: 1px solid #808080;
}

.tabs .current {
    padding: 4px 8px 0;
    background: #484848;
    font-weight: 700;
}

.panel {
    grid-area: 2 / 1;
    min-width: 0;
    display: flex;
    flex-direction: column;
    padding: 2px 3px 2px 0;
    border-right: 1px solid #808080;
}

.grip {
    flex: none;
    height: 16px;
    border: 1px solid #808080;
    border-width: 1px 0;
    background: radial-gradient(circle, #ddd 2px, #999 4px, transparent 4px);
}

.panel-tabs {
    flex: none;
    display: flex;
    height: 27px;
    margin-top: 4px;
    border-bottom: 1px solid #bbb;
}

.panel-tabs button {
    flex: none;
    width: 40px;
    display: flex;
    align-items: center;
    justify-content: center;
    background: #2d2d2d;
    border: 1px solid #808080;
    border-width: 1px 1px 0 0;
}

.panel-tabs .current {
    background: none;
}

.panel-tabs .more {
    flex: 1;
    justify-content: flex-end;
    background: none;
    border: 0;
}

.filter {
    flex: none;
    height: 25px;
    display: flex;
    align-items: center;
    margin-left: 3px;
    padding-left: 2px;
    background: #555;
    border: 1px solid #808080;
}

.filter .caret {
    margin-top: 8px;
}

.tree {
    flex: none;
    margin: 0;
    padding: 0;
    list-style: none;
    overflow: hidden;
    border-bottom: 2px solid #2b4fd0;
}

.tree li {
    height: 22px;
    display: flex;
    align-items: center;
    gap: 5px;
    padding-left: 25px;
    white-space: nowrap;
}

.tree svg {
    width: 19px;
    height: 19px;
}

.tree .root {
    padding-left: 2px;
}

.tree .branch {
    padding-left: 8px;
}

.tree .branch::before {
    content: "";
    margin-right: 8px;
    border: 4px solid transparent;
    border-left-color: #fff;
    border-right: 0;
}

.hscroll {
    flex: none;
    height: 16px;
    margin-top: auto;
    display: flex;
    background: #f0f0f0;
}

.hscroll button {
    width: 16px;
    display: flex;
    align-items: center;
    justify-content: center;
}

.hscroll button:last-child {
    margin-left: auto;
}

.hscroll svg {
    width: 10px;
    height: 10px;
}

.thumb {
    width: 109px;
    background: #cdcdcd;
}

/* Graphics area */
.canvas {
    grid-area: 1 / 2 / 3 / 3;
    position: relative;
    min-width: 0;
    min-height: 0;
    background: #fff;
}

.model {
    width: 100%;
    height: 100%;
}

.jaw {
    fill: #989cb1;
    stroke: #000;
    stroke-width: 1.5;
}

.edge {
    fill: none;
    stroke: #000;
    stroke-width: 3;
}

.hole {
    fill: #fff;
}

.construction {
    fill: none;
    stroke: #808080;
    stroke-width: 2;
}

.center {
    stroke: #777;
    stroke-width: 1;
}

.engraving {
    fill: #989cb1;
    stroke: #000;
    stroke-width: 1;
    font-family: Lato, sans-serif;
    font-size: 46px;
    font-weight: 300;
    text-anchor: middle;
}

.triad {
    font-size: 11px;
}

.view-tools {
    position: absolute;
    top: 2px;
    left: 0;
    right: 2px;
    display: flex;
    justify-content: center;
}

.view-tools .tool svg {
    width: 20px;
    height: 20px;
}

.view-tools .drop {
    width: 14px;
}

.view-tools .drop::after {
    border-top-color: #888;
}

.doc-tools {
    position: absolute;
    top: 2px;
    right: 5px;
    display: flex;
}

.doc-tools .tool svg {
    width: 20px;
    height: 20px;
}

.task-pane {
    position: absolute;
    top: 51px;
    right: 0;
    width: 25px;
    border: 1px solid #808080;
    border-width: 1px 0 0 1px;
    background: #2d2d2d;
}

.task-pane button {
    width: 100%;
    height: 24px;
    display: flex;
    align-items: center;
    justify-content: center;
    border-bottom: 1px solid #808080;
}

.task-pane svg {
    width: 18px;
    height: 18px;
}

.task-pane .current {
    background: #b4b4b4;
}

.splitter {
    position: absolute;
    top: 624px;
    left: 0;
    width: 8px;
    height: 38px;
    background: radial-gradient(circle, #ddd 1px, #484848 3px);
}

/* Sheet tabs */
.sheets {
    flex: none;
    height: 16px;
    display: flex;
    border: 1px solid #808080;
    border-left: 0;
    line-height: 12px;
    white-space: nowrap;
}

.sheet-nav {
    display: flex;
    padding-left: 2px;
    background: #9cb4b8;
}

.sheet-nav button {
    width: 16px;
    background: #aaa;
    border: 1px solid #888;
}

.sheet-nav svg {
    width: 14px;
    height: 12px;
}

.sheets a {
    padding: 0 10px;
    background: #2d2d2d;
    border-right: 1px solid #808080;
}

.sheets .current {
    padding: 0 10px 0 14px;
    background: none;
    font-weight: 700;
}

.sheets .study {
    padding-right: 18px;
}

/* Status bar */
.status {
    flex: none;
    height: 18px;
    display: flex;
    align-items: center;
    padding-right: 3px;
    white-space: nowrap;
}

.edition {
    margin-right: auto;
    padding-left: 1px;
}

.cell {
    height: 14px;
    padding: 0 7px 0 4px;
    border-right: 1px solid #ccc;
}

.gap {
    width: 7px;
    padding: 0;
}

.blank {
    width: 16px;
    padding: 0;
}

.units {
    display: flex;
    align-items: center;
    gap: 18px;
    margin: 0 67px 0 32px;
}

.caret.up {
    border-top: 0;
    border-bottom: 3px solid #fff;
}

.tag {
    width: 16px;
    height: 16px;
}
```
